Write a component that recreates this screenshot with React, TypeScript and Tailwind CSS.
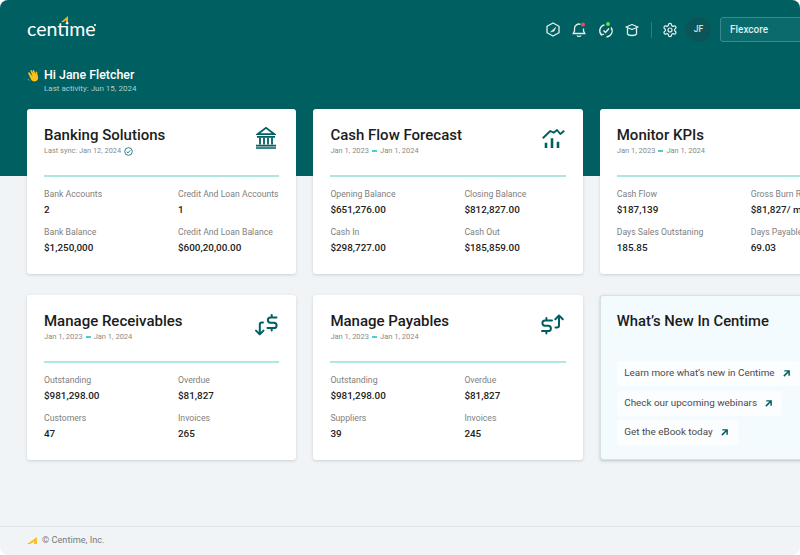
import React from "react";

const Teal = "#005f61";

function Stat({ label, value }: { label: string; value: string }) {
  return (
    <div className="flex flex-col">
      <span className="text-[8.7px] leading-[12px] text-[#808080] whitespace-nowrap">{label}</span>
      <span className="mt-[3px] text-[9.9px] leading-[14px] font-medium text-[#222] whitespace-nowrap">{value}</span>
    </div>
  );
}

function DateRange() {
  return (
    <div className="flex items-center text-[7.5px] leading-[12px] text-[#8a8a8a] whitespace-nowrap">
      <span>Jan 1, 2023</span>
      <span className="mx-[3px] w-[5px] h-[2px] bg-[#4fcfc4]" />
      <span>Jan 1, 2024</span>
    </div>
  );
}

function Card({
  title,
  sub,
  icon,
  stats,
}: {
  title: string;
  sub: React.ReactNode;
  icon?: React.ReactNode;
  stats: [string, string][];
}) {
  return (
    <div className="w-[269.2px] h-[165px] shrink-0 bg-white rounded-[3px] shadow-[0_1px_3px_rgba(60,80,90,0.22)] px-[17px] pt-[17px]">
      <div className="h-[51px] flex justify-between border-b-2 border-[#b0e6e0]">
        <div>
          <div className="text-[15px] leading-[18px] font-medium text-[#1c1c1c] whitespace-nowrap">{title}</div>
          <div className="mt-[1px]">{sub}</div>
        </div>
        {icon}
      </div>
      <div className="grid grid-cols-[134px_1fr] gap-y-[9px] pt-[11px]">
        {stats.map(([l, v]) => (
          <Stat key={l} label={l} value={v} />
        ))}
      </div>
    </div>
  );
}

function BankIcon() {
  return (
    <svg width="20" height="23" viewBox="0 0 20 23" fill="none" stroke={Teal} strokeWidth="1.7" className="mr-[3px]">
      <path d="M1.500 8.200 10 1.800l8.500 6.400z" />
      <path d="M1 10.800h18M0 19.700h20M0 22h20" />
      <path d="M4 11.500v7M8 11.500v7M12 11.500v7M16 11.500v7" strokeWidth="1.800" />
    </svg>
  );
}

function ChartIcon() {
  return (
    <svg width="23" height="20" viewBox="0 0 23 20" fill="none" stroke={Teal} className="mt-[3px] mr-[1px]">
      <path d="M.8 9.300 8.300 2l3.400 1.700L15 1l3.300 4 4-3.300" strokeWidth="1.900" strokeLinejoin="round" />
      <path d="M4 13.700v5.300M10 9.300v9.700M16 12.700v6.300" strokeWidth="2.600" />
    </svg>
  );
}

function ReceiveIcon() {
  return (
    <svg width="24" height="22" viewBox="0 0 24 22" fill="none" stroke={Teal} strokeWidth="2" strokeLinecap="round" strokeLinejoin="round" className="mt-[2px] mr-[1px]">
      <path d="M22.500 3.500h-6a2.600 2.600 0 0 0 0 5.200h3.400a2.700 2.700 0 0 1 0 5.400h-6.400M17.700 1v2.200M17.700 14.200v2.300" />
      <path d="M9 8.500H7.800A2 2 0 0 0 5.800 10.500V20M2 16.600l3.800 3.800 3.700-3.800" />
    </svg>
  );
}

function PayIcon() {
  return (
    <svg width="24" height="22" viewBox="0 0 24 22" fill="none" stroke={Teal} strokeWidth="2" strokeLinecap="round" strokeLinejoin="round" className="mt-[2px] mr-[1px]">
      <path d="M11 6.500H4a2.600 2.600 0 0 0 0 5.200h3.200a2.700 2.700 0 0 1 0 5.400H1M5.400 4v2.200M5.400 17.200v2.300" />
      <path d="M14.500 13.500H16a2 2 0 0 0 2-2V2M14.300 5.300 18 1.500l3.800 3.800" />
    </svg>
  );
}

function Arrow() {
  return (
    <svg width="7" height="7" viewBox="0 0 8 8" fill="none" stroke={Teal} strokeWidth="1.700" className="ml-[8px]">
      <path d="M1 7 6.600 1.400M1.500 1h5.500v5.500" />
    </svg>
  );
}

function LinkPill({ children }: { children: string }) {
  return (
    <div className="h-[25px] w-fit flex items-center pl-[7.500px] pr-[10px] bg-[#fbfdfe] rounded-[3px] text-[9.900px] text-[#4a4a4a] whitespace-nowrap">
      {children}
      <Arrow />
    </div>
  );
}

function Wave() {
  return (
    <svg width="13" height="13" viewBox="0 0 13 14">
      <path d="M2 3.500 5.500 8 4 4 3.200 1.600c.6-.8 1.400-.3 1.700.3L6.600 5 5.600 1.800c.3-1 1.400-.8 1.700 0l1.400 3.600.2-2.200c.4-.7 1.400-.5 1.500.3.200 1.700.6 3.500 1 5 .4 2-.6 4-2.800 4.700-2 .5-3.600-.2-4.600-1.700L1 5c-.5-1 .5-2.200 1-1.500z" fill="#fcc21b" />
      <path d="M.8 10.500c.2 1 .7 1.600 1.500 2" stroke="#9ccfd0" strokeWidth=".7" fill="none" />
    </svg>
  );
}

export default function App() {
  return (
    <div className="w-[800px] h-[555px] overflow-hidden bg-white font-['Roboto',sans-serif]">
      <div className="w-full h-full flex flex-col rounded-[8px] overflow-hidden bg-[#f0f4f7]">
        <header className="h-[176px] shrink-0 bg-[#005f61] pl-[27px]">
          <div className="h-[59px] flex items-center justify-between">
            <div className="relative mt-[-1px]">
              <span className="block text-[19.500px] leading-[24px] text-white font-['Lato',sans-serif] font-normal">centime</span>
              <span className="absolute left-[67px] top-[7px] w-[1.500px] h-[1.500px] rounded-full bg-white" />
              <svg width="8" height="6" viewBox="0 0 8 6" className="absolute left-[34px] top-[-1px]">
                <path d="M0 6 7 0V6H5V4L3 6z" fill="#f5b021" />
              </svg>
            </div>
            <div className="flex items-center">
              <svg width="14" height="15" viewBox="0 0 14 15" fill="none" stroke="#e4f0f0" strokeWidth="1.300" className="mr-[12px]">
                <path d="M7 1 13 4.300v6.400L7 14 1 10.700V4.300z" strokeLinejoin="round" />
                <path d="M4.500 10 9.800 5.200 8 9.200z" fill="#e4f0f0" strokeWidth=".5" />
              </svg>
              <svg width="14" height="16" viewBox="0 0 14 16" fill="none" stroke="#e4f0f0" strokeWidth="1.300" className="mr-[13px] overflow-visible">
                <path d="M2.500 6.500a4.500 4.500 0 0 1 6-4.200M11.500 6.500v2.500l1.300 2.500H1.200L2.500 9V6.500M5 13.500c.6 1.200 3.400 1.200 4 0" />
                <circle cx="11" cy="2.500" r="2" fill="#ef4b5f" stroke="none" />
              </svg>
              <svg width="14" height="16" viewBox="0 0 14 16" fill="none" stroke="#e4f0f0" strokeWidth="1.300" className="mr-[12px] overflow-visible">
                <path d="M5.500 2.800A6 6 0 0 0 2.600 13M12 5.500A6 6 0 0 1 7.500 15" />
                <path d="M1 10.500 2.600 13l2.500-1" />
                <path d="M4.500 8.500 6.500 10.500 10 6.500" strokeWidth="1.500" />
                <circle cx="9" cy="2" r="2" fill="#5fe04a" stroke="none" />
              </svg>
              <svg width="14" height="14" viewBox="0 0 14 14" fill="none" stroke="#e4f0f0" strokeWidth="1.300">
                <path d="M1 4 7 1.500 13 4 7 6.500z" strokeLinejoin="round" />
                <path d="M2.500 5v6c1 2 8 2 9 0V5" />
              </svg>
              <div className="w-px h-[16px] bg-[#2b7f80] mx-[12px]" />
              <svg width="16" height="16" viewBox="0 0 24 24" fill="none" stroke="#e4f0f0" strokeWidth="1.800" className="mr-[8px] ml-[-2px]">
                <circle cx="12" cy="12" r="3" />
                <path d="M12.220 2h-.44a2 2 0 0 0-2 2v.18a2 2 0 0 1-1 1.730l-.43.250a2 2 0 0 1-2 0l-.15-.080a2 2 0 0 0-2.730.730l-.22.380a2 2 0 0 0 .730 2.730l.15.100a2 2 0 0 1 1 1.720v.510a2 2 0 0 1-1 1.740l-.15.090a2 2 0 0 0-.730 2.730l.22.380a2 2 0 0 0 2.730.730l.15-.080a2 2 0 0 1 2 0l.43.250a2 2 0 0 1 1 1.730V20a2 2 0 0 0 2 2h.44a2 2 0 0 0 2-2v-.18a2 2 0 0 1 1-1.730l.43-.250a2 2 0 0 1 2 0l.15.080a2 2 0 0 0 2.730-.730l.22-.390a2 2 0 0 0-.730-2.730l-.15-.080a2 2 0 0 1-1-1.740v-.500a2 2 0 0 1 1-1.740l.15-.090a2 2 0 0 0 .730-2.730l-.22-.380a2 2 0 0 0-2.730-.730l-.15.080a2 2 0 0 1-2 0l-.43-.250a2 2 0 0 1-1-1.730V4a2 2 0 0 0-2-2z" />
              </svg>
              <div className="w-[25px] h-[25px] rounded-full bg-[#0a5558] flex items-center justify-center text-[8.500px] font-medium text-[#cfe3e3] mr-[9px]">JF</div>
              <div className="w-[90px] h-[25px] mr-[-10px] border border-[#3a8a8b] rounded-[3px] bg-[#0a6a6c] flex items-center pl-[9px] text-[10px] font-medium text-[#dcecec]">Flexcore</div>
            </div>
          </div>
          <div className="flex items-center gap-[4px] mt-[8px] text-white">
            <Wave />
            <span className="text-[12.400px] leading-[16px] font-medium">Hi Jane Fletcher</span>
          </div>
          <div className="ml-[17px] text-[8px] leading-[12px] text-[#a9cfcf]">Last activity: Jun 15, 2024</div>
        </header>

        <main className="mt-[-67px] pl-[27px] flex flex-col gap-[21px] grow">
          <div className="flex gap-[17.200px]">
            <Card
              title="Banking Solutions"
              sub={
                <div className="flex items-center gap-[3px] text-[7.400px] leading-[12px] text-[#8a8a8a]">
                  Last sync: Jan 12, 2024
                  <svg width="9" height="9" viewBox="0 0 9 9" fill="none" stroke={Teal} strokeWidth=".8">
                    <circle cx="4.500" cy="4.500" r="3.800" />
                    <path d="M2.700 4.600 4 5.900l2.300-2.600" />
                  </svg>
                </div>
              }
              icon={<BankIcon />}
              stats={[
                ["Bank Accounts", "2"],
                ["Credit And Loan Accounts", "1"],
                ["Bank Balance", "$1,250,000"],
                ["Credit And Loan Balance", "$600,20,00.00"],
              ]}
            />
            <Card
              title="Cash Flow Forecast"
              sub={<DateRange />}
              icon={<ChartIcon />}
              stats={[
                ["Opening Balance", "$651,276.00"],
                ["Closing Balance", "$812,827.00"],
                ["Cash In", "$298,727.00"],
                ["Cash Out", "$185,859.00"],
              ]}
            />
            <Card
              title="Monitor KPIs"
              sub={<DateRange />}
              stats={[
                ["Cash Flow", "$187,139"],
                ["Gross Burn Rate", "$81,827/ mo"],
                ["Days Sales Outstaning", "185.85"],
                ["Days Payable", "69.03"],
              ]}
            />
          </div>
          <div className="flex gap-[17.200px]">
            <Card
              title="Manage Receivables"
              sub={<DateRange />}
              icon={<ReceiveIcon />}
              stats={[
                ["Outstanding", "$981,298.00"],
                ["Overdue", "$81,827"],
                ["Customers", "47"],
                ["Invoices", "265"],
              ]}
            />
            <Card
              title="Manage Payables"
              sub={<DateRange />}
              icon={<PayIcon />}
              stats={[
                ["Outstanding", "$981,298.00"],
                ["Overdue", "$81,827"],
                ["Suppliers", "39"],
                ["Invoices", "245"],
              ]}
            />
            <div className="w-[269.200px] h-[165px] shrink-0 bg-[#f4fbff] rounded-[3px] border border-[#d6e2e8] shadow-[0_1px_3px_rgba(60,80,90,0.3)] px-[16px] pt-[16px]">
              <div className="text-[14.800px] leading-[18px] font-medium text-[#1c1c1c] whitespace-nowrap">What’s New In Centime</div>
              <div className="mt-[31px] flex flex-col gap-[4.700px]">
                <LinkPill>Learn more what’s new in Centime</LinkPill>
                <LinkPill>Check our upcoming webinars</LinkPill>
                <LinkPill>Get the eBook today</LinkPill>
              </div>
            </div>
          </div>
        </main>

        <footer className="h-[29px] shrink-0 border-t border-[#e0e5e8] pl-[27px] flex items-center gap-[5px] text-[9.200px] text-[#7a7a7a] pb-[2px]">
          <svg width="10" height="7" viewBox="0 0 10 7">
            <path d="M0 7 10 0V7H7V4.500L3.500 7z" fill="#fbbf24" />
          </svg>
          © Centime, Inc.
        </footer>
      </div>
    </div>
  );
}
